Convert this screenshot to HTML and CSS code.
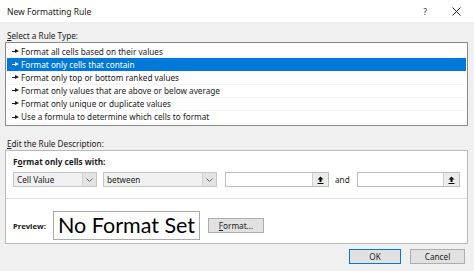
FILE: index.html
```html
<!DOCTYPE html>
<html lang="en">
<head>
  <meta charset="UTF-8" />
  <title>New Formatting Rule</title>
  <link rel="stylesheet" href="styles.css">
</head>
<body>
  <div class="dialog">
    <div class="titlebar">
      <span class="title">New Formatting Rule</span>
      <span class="help">?</span>
      <span class="close">
        <svg width="9" height="9" viewBox="0 0 9 9"><path d="M0.5 0.5 L8.5 8.5 M8.5 0.5 L0.5 8.5" stroke="#222" stroke-width="1" fill="none"/></svg>
      </span>
    </div>

    <div class="label"><u>S</u>elect a Rule Type:</div>
    <ul class="rule-list">
      <li><i class="bullet"></i>Format all cells based on their values</li>
      <li class="selected"><i class="bullet"></i>Format only cells that contain</li>
      <li><i class="bullet"></i>Format only top or bottom ranked values</li>
      <li><i class="bullet"></i>Format only values that are above or below average</li>
      <li><i class="bullet"></i>Format only unique or duplicate values</li>
      <li><i class="bullet"></i>Use a formula to determine which cells to format</li>
    </ul>

    <div class="label"><u>E</u>dit the Rule Description:</div>
    <div class="desc-box">
      <div class="desc-top">
        <div class="desc-title">F<u>o</u>rmat only cells with:</div>
        <div class="controls">
          <div class="combo combo-type">
            <span class="combo-text">Cell Value</span>
            <span class="combo-btn"><svg width="7" height="4" viewBox="0 0 7 4"><path d="M0.5 0.5 L3.5 3.5 L6.5 0.5" stroke="#666" fill="none"/></svg></span>
          </div>
          <div class="combo combo-op">
            <span class="combo-text">between</span>
            <span class="combo-btn"><svg width="7" height="4" viewBox="0 0 7 4"><path d="M0.5 0.5 L3.5 3.5 L6.5 0.5" stroke="#666" fill="none"/></svg></span>
          </div>
          <div class="field field-first">
            <span class="ref-btn"><svg width="7" height="8" viewBox="0 0 7 8"><path d="M3.5 0.5 L6.5 3.5 L4.5 3.5 L4.5 6 L2.5 6 L2.5 3.5 L0.5 3.5 Z" fill="#000"/><rect x="0.5" y="7" width="6" height="1" fill="#000"/></svg></span>
          </div>
          <span class="and">and</span>
          <div class="field field-second">
            <span class="ref-btn"><svg width="7" height="8" viewBox="0 0 7 8"><path d="M3.5 0.5 L6.5 3.5 L4.5 3.5 L4.5 6 L2.5 6 L2.5 3.5 L0.5 3.5 Z" fill="#000"/><rect x="0.5" y="7" width="6" height="1" fill="#000"/></svg></span>
          </div>
        </div>
      </div>
      <div class="desc-bottom">
        <span class="preview-label">Preview:</span>
        <div class="preview">No Format Set</div>
        <button class="btn btn-format"><u>F</u>ormat...</button>
      </div>
    </div>

    <div class="actions">
      <button class="btn btn-ok">OK</button>
      <button class="btn btn-cancel">Cancel</button>
    </div>
  </div>
</body>
</html>
```

FILE: styles.css
```css
* { box-sizing: border-box; }
body {
  margin: 0;
  background-color: #f0f0f0;
  font-family: "Noto Sans", "Open Sans", sans-serif;
  font-size: 8.2px;
  color: #1a1a1a;
}
.dialog {
  width: 474px;
  height: 271px;
  overflow: hidden;
}
.titlebar {
  height: 22px;
  background-color: #fff;
  display: flex;
  align-items: center;
  padding-left: 7px;
}
.title {
  font-size: 8.5px;
  flex: 1;
}
.help {
  font-size: 8.5px;
  width: 12px;
  text-align: center;
  margin-right: 21px;
  color: #333;
}
.close {
  display: flex;
  margin-right: 13px;
}
.label {
  height: 13px;
  line-height: 13px;
  padding-left: 7px;
  margin-top: 7px;
}
.rule-list {
  list-style: none;
  margin: 0 6px 0 5px;
  padding: 2px 1px 1px;
  height: 84px;
  background-color: #fff;
  border: 1px solid #8a8a8a;
}
.rule-list li {
  height: 13.2px;
  line-height: 13.2px;
  padding-left: 5px;
  display: flex;
  align-items: center;
  border-bottom: 1px solid #f4f4f4;
}
.rule-list li.selected {
  background-color: #0078d7;
  color: #fff;
  border-bottom-color: #0078d7;
}
.bullet {
  display: inline-block;
  position: relative;
  width: 7px;
  height: 5px;
  margin-right: 2px;
}
.bullet::before {
  content: "";
  position: absolute;
  left: 0;
  top: 2px;
  width: 4px;
  height: 1px;
  background-color: currentColor;
}
.bullet::after {
  content: "";
  position: absolute;
  left: 3px;
  top: 0;
  border-left: 4px solid currentColor;
  border-top: 2.5px solid transparent;
  border-bottom: 2.5px solid transparent;
}
.rule-list + .label {
  margin-top: 11px;
}
.desc-box {
  margin: 0 6px 0 5px;
  height: 94px;
  background-color: #fff;
  border: 1px solid #b9b9b9;
}
.desc-top {
  padding: 5px 7px 0;
  height: 48px;
  border-bottom: 1px solid #dcdcdc;
}
.desc-title {
  font-weight: bold;
  height: 12px;
  line-height: 12px;
  margin-bottom: 4px;
}
.controls {
  display: flex;
  align-items: center;
  height: 15px;
}
.combo {
  display: flex;
  height: 15px;
  background-color: #f0f0f0;
  border: 1px solid #c6c6c6;
}
.combo-type {
  width: 84px;
  margin-right: 6px;
}
.combo-op {
  width: 114px;
  margin-right: 8px;
}
.combo-text {
  flex: 1;
  padding-left: 3px;
  line-height: 13px;
}
.combo-btn {
  width: 14px;
  display: flex;
  align-items: center;
  justify-content: center;
  background-color: #e3e3e3;
  border-left: 1px solid #d4d4d4;
}
.field {
  display: flex;
  justify-content: flex-end;
  height: 15px;
  background-color: #fff;
  border: 1px solid #bcbcbc;
}
.field-first {
  width: 104px;
}
.field-second {
  width: 103px;
}
.ref-btn {
  width: 16px;
  display: flex;
  align-items: center;
  justify-content: center;
  background-color: #ececec;
  border-left: 1px solid #cfcfcf;
}
.and {
  width: 28px;
  padding-left: 6px;
}
.desc-bottom {
  display: flex;
  align-items: center;
  padding: 12px 7px 0;
}
.preview-label {
  font-weight: bold;
  font-size: 7.8px;
  width: 40px;
}
.preview {
  width: 147px;
  height: 29px;
  border: 1px solid #a8a8a8;
  font-family: Lato, "Noto Sans", sans-serif;
  font-size: 21.5px;
  line-height: 27px;
  text-align: center;
  color: #000;
  margin-right: 8px;
}
.btn {
  font-family: "Noto Sans", "Open Sans", sans-serif;
  font-size: 8.2px;
  color: #1a1a1a;
  background-color: #e1e1e1;
  border: 1px solid #adadad;
  padding: 0;
  height: 15px;
}
.btn-format {
  width: 56px;
}
.actions {
  display: flex;
  justify-content: flex-end;
  gap: 9px;
  padding: 5px 9px 0 0;
}
.btn-ok {
  width: 52px;
  border-color: #0078d7;
}
.btn-cancel {
  width: 55px;
}
```
